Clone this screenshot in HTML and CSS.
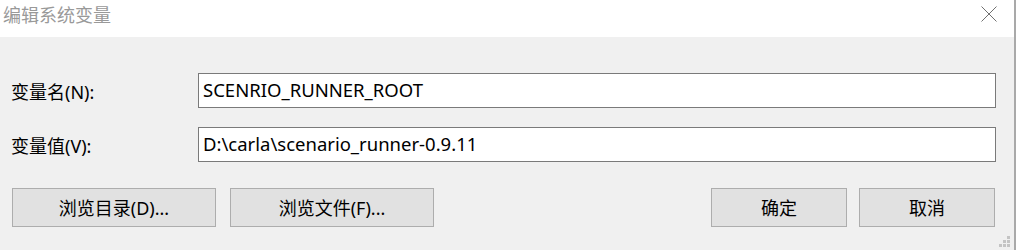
FILE: index.html
```html
<!DOCTYPE html>
<html lang="zh-CN">
<head>
    <meta charset="UTF-8">
    <meta name="viewport" content="width=device-width, initial-scale=1.0">
    <title>编辑系统变量</title>
    <link rel="stylesheet" href="styles.css">
</head>
<body>
    <div class="dialog">
        <div class="title-bar">
            <span class="title">编辑系统变量</span>
            <svg class="close" width="16" height="16" viewBox="0 0 16 16">
                <path d="M0.5 0.5 L15.5 15.5 M15.5 0.5 L0.5 15.5" stroke="#707070" stroke-width="1" fill="none"/>
            </svg>
        </div>

        <div class="content">
            <div class="field">
                <label class="field-label" for="varName">变量名(<u>N</u>):</label>
                <input type="text" id="varName" class="field-input" value="SCENRIO_RUNNER_ROOT">
            </div>
            <div class="field">
                <label class="field-label" for="varValue">变量值(<u>V</u>):</label>
                <input type="text" id="varValue" class="field-input" value="D:\carla\scenario_runner-0.9.11">
            </div>

            <div class="button-row">
                <div class="button-group">
                    <button class="btn btn-wide">浏览目录(D)...</button>
                    <button class="btn btn-wide">浏览文件(F)...</button>
                </div>
                <div class="button-group right">
                    <button class="btn">确定</button>
                    <button class="btn">取消</button>
                </div>
            </div>

            <svg class="grip" width="12" height="11" viewBox="0 0 12 11">
                <rect x="8" y="0" width="3" height="3" fill="#c4c4c4"/>
                <rect x="4" y="4" width="3" height="3" fill="#c4c4c4"/>
                <rect x="8" y="4" width="3" height="3" fill="#c4c4c4"/>
                <rect x="0" y="8" width="3" height="3" fill="#c4c4c4"/>
                <rect x="4" y="8" width="3" height="3" fill="#c4c4c4"/>
                <rect x="8" y="8" width="3" height="3" fill="#c4c4c4"/>
            </svg>
        </div>
    </div>
</body>
</html>
```

FILE: styles.css
```css
body {
    margin: 0;
    background-color: #ffffff;
    font-family: "Noto Sans", "Noto Sans CJK SC", sans-serif;
}

.dialog {
    width: 1014px;
    height: 250px;
    border-right: 2px solid #a9a9a9;
    display: flex;
    flex-direction: column;
}

.title-bar {
    height: 37px;
    background-color: #ffffff;
    display: flex;
    align-items: center;
    justify-content: space-between;
    padding: 0 17px 0 3px;
}

.title {
    font-size: 18px;
    color: #999999;
    margin-top: -10px;
}

.close {
    margin-top: -9px;
}

.content {
    position: relative;
    flex: 1;
    background-color: #f0f0f0;
    padding: 36px 0 0 0;
}

.field {
    display: flex;
    align-items: center;
    margin-bottom: 19px;
}

.field-label {
    width: 187px;
    padding-left: 11px;
    font-size: 18px;
    color: #000;
}

.field-label u {
    text-decoration: none;
}

.field-input {
    width: 798px;
    height: 35px;
    box-sizing: border-box;
    border: 1px solid #7a7a7a;
    background-color: #ffffff;
    padding: 0 4px 3px;
    font-family: inherit;
    font-size: 18.5px;
    color: #000;
    outline: none;
}

.button-row {
    display: flex;
    justify-content: space-between;
    padding: 7px 19px 0 12px;
}

.button-group {
    display: flex;
    gap: 14px;
}

.button-group.right {
    gap: 12px;
}

.btn {
    width: 136px;
    height: 39px;
    background-color: #e1e1e1;
    border: 1px solid #adadad;
    font-family: inherit;
    font-size: 18px;
    color: #000;
    padding: 0 0 2px;
}

.btn-wide {
    width: 204px;
}

.grip {
    position: absolute;
    right: 3px;
    bottom: 3px;
}
```
